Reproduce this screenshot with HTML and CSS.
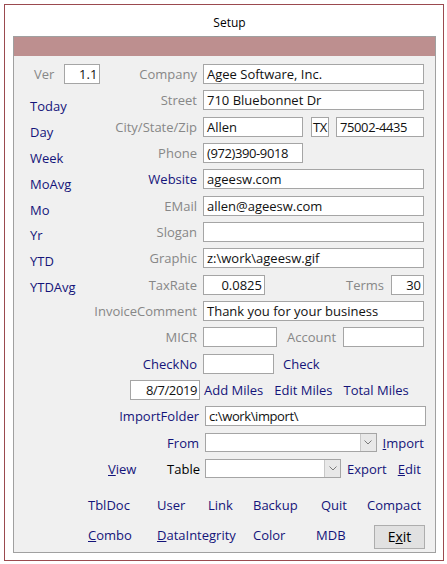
FILE: index.html
```html
<!DOCTYPE html>
<html>
<head>
<meta charset="utf-8">
<title>Setup</title>
<link rel="stylesheet" href="styles.css">
</head>
<body>
<div class="frame">
  <div class="title">Setup</div>
  <div class="panel">
    <div class="bar"></div>
    <div class="content">
      <div class="top">
        <div class="side">
          <div class="ver"><span class="lbl">Ver</span><span class="box num ver-box">1.1</span></div>
          <div class="links">
            <span class="link">Today</span>
            <span class="link">Day</span>
            <span class="link">Week</span>
            <span class="link">MoAvg</span>
            <span class="link">Mo</span>
            <span class="link">Yr</span>
            <span class="link">YTD</span>
            <span class="link">YTDAvg</span>
          </div>
        </div>
        <div class="form">
          <span class="lbl">Company</span>
          <div class="field"><span class="box grow">Agee Software, Inc.</span></div>

          <span class="lbl">Street</span>
          <div class="field"><span class="box grow">710 Bluebonnet Dr</span></div>

          <span class="lbl">City/State/Zip</span>
          <div class="field city"><span class="box w-city">Allen</span><span class="box w-st narrow">TX</span><span class="box grow narrow">75002-4435</span></div>

          <span class="lbl">Phone</span>
          <div class="field"><span class="box w-city narrow">(972)390-9018</span></div>

          <span class="lbl blue">Website</span>
          <div class="field"><span class="box grow">ageesw.com</span></div>

          <span class="lbl">EMail</span>
          <div class="field"><span class="box grow">allen@ageesw.com</span></div>

          <span class="lbl">Slogan</span>
          <div class="field"><span class="box grow"></span></div>

          <span class="lbl">Graphic</span>
          <div class="field"><span class="box grow">z:\work\ageesw.gif</span></div>

          <span class="lbl">TaxRate</span>
          <div class="field"><span class="box num w-tax">0.0825</span><span class="lbl terms">Terms</span><span class="box num w-terms">30</span></div>

          <span class="lbl">InvoiceComment</span>
          <div class="field"><span class="box grow">Thank you for your business</span></div>

          <span class="lbl">MICR</span>
          <div class="field"><span class="box w-micr"></span><span class="lbl acct">Account</span><span class="box grow"></span></div>

          <span class="lbl blue">CheckNo</span>
          <div class="field"><span class="box w-check"></span><span class="link check">Check</span></div>

          <div class="lcell"><span class="box num narrow w-date">8/7/2019</span></div>
          <div class="field miles"><span class="link">Add Miles</span><span class="link">Edit Miles</span><span class="link">Total Miles</span></div>

          <span class="lbl blue shift">ImportFolder</span>
          <div class="field"><span class="box w-import narrow">c:\work\import\</span></div>

          <span class="lbl blue shift">From</span>
          <div class="field"><span class="combo w-from"><span class="drop"><svg width="8" height="5" viewBox="0 0 8 5"><polyline points="0.5,0.5 4,4 7.5,0.5" fill="none" stroke="#7a7a7a" stroke-width="1"/></svg></span></span><span class="link"><u>I</u>mport</span></div>

          <div class="lcell view"><span class="link"><u>V</u>iew</span><span class="tbl">Table</span></div>
          <div class="field"><span class="combo w-table"><span class="drop"><svg width="8" height="5" viewBox="0 0 8 5"><polyline points="0.5,0.5 4,4 7.5,0.5" fill="none" stroke="#7a7a7a" stroke-width="1"/></svg></span></span><span class="link">Export</span><span class="link edit"><u>E</u>dit</span></div>
        </div>
      </div>
      <div class="actions row1">
        <span class="link">TblDoc</span>
        <span class="link">User</span>
        <span class="link">Link</span>
        <span class="link">Backup</span>
        <span class="link">Quit</span>
        <span class="link">Compact</span>
      </div>
      <div class="actions row2">
        <span class="link"><u>C</u>ombo</span>
        <span class="link"><u>D</u>ataIntegrity</span>
        <span class="link">Color</span>
        <span class="link">MDB</span>
        <span class="btn">E<u>x</u>it</span>
      </div>
    </div>
  </div>
</div>
</body>
</html>
```

FILE: styles.css
```css
html, body {
  margin: 0;
  padding: 0;
  background: #ffffff;
}

body {
  font-family: "Open Sans", "Noto Sans", sans-serif;
  font-size: 13px;
  color: #000000;
}

.frame {
  margin: 4px 0 0 4px;
  width: 438px;
  height: 555px;
  border: 1px solid #9b4a4f;
  display: flex;
  flex-direction: column;
}

.title {
  height: 31px;
  display: flex;
  align-items: center;
  justify-content: center;
  padding: 3px 0 0 11px;
  box-sizing: border-box;
  font-size: 12px;
  color: #000;
}

.panel {
  margin-left: 8px;
  width: 421px;
  height: 515px;
  border: 1px solid #a0a0a0;
  background: #f0f0f0;
  display: flex;
  flex-direction: column;
}

.bar {
  height: 19px;
  background: #bd8f8f;
}

.content {
  padding: 8px 10px 0 0;
}

.top {
  display: flex;
  align-items: flex-start;
}

.side {
  width: 78px;
  padding-left: 16px;
}

.ver {
  display: flex;
  align-items: center;
  height: 20px;
  padding-left: 4px;
  gap: 10px;
}

.ver-box {
  width: 36px;
}

.links {
  display: flex;
  flex-direction: column;
  margin-top: 10px;
}

.links .link {
  height: 25.9px;
  line-height: 25.9px;
}

.lbl {
  color: #878787;
  white-space: nowrap;
}

.blue,
.link {
  color: #14147a;
  white-space: nowrap;
}

.form {
  display: grid;
  grid-template-columns: 89px 221px;
  grid-auto-rows: 20px;
  column-gap: 6px;
  row-gap: 6.33px;
}

.form > .lbl {
  display: flex;
  align-items: center;
  justify-content: flex-end;
}

.form > .shift {
  margin-right: -2px;
}

.lcell {
  display: flex;
  align-items: center;
  justify-content: flex-end;
  margin-right: -3px;
}

.lcell.view {
  justify-content: space-between;
}

.field {
  display: flex;
  align-items: center;
  min-width: 0;
}

.box {
  box-sizing: border-box;
  height: 20px;
  border: 1px solid #a5a5a5;
  background: #ffffff;
  padding: 0 3px;
  line-height: 18px;
  white-space: nowrap;
  overflow: hidden;
  color: #111;
}

.num {
  text-align: right;
  padding-right: 2px;
}

.narrow {
  letter-spacing: -0.4px;
}

.grow {
  flex: 1;
}

.city {
  gap: 8px;
}

.city .w-st {
  width: 18px;
  flex: none;
  padding: 0 1px;
  margin-right: -1px;
}

.w-city { width: 100px; }
.w-tax { width: 62px; }
.w-terms { width: 33px; }
.terms { margin-left: auto; margin-right: 7px; }
.w-micr { width: 74px; }
.acct { margin-left: 10px; margin-right: 7px; }
.w-check { width: 71px; }
.check { margin-left: 9px; }
.w-date { width: 70px; }
.w-import { width: 221px; margin-left: 2px; flex: none; }

.miles {
  gap: 11px;
  margin-left: 1px;
}

.combo {
  box-sizing: border-box;
  height: 19px;
  border: 1px solid #a5a5a5;
  background: #ffffff;
  display: flex;
  justify-content: flex-end;
  padding: 0;
  margin-left: 2px;
  margin-right: 6px;
}

.w-from { width: 173px; }
.w-table { width: 136px; }

.drop {
  box-sizing: border-box;
  width: 16px;
  height: 17px;
  border-left: 1px solid #c8c8c8;
  background: #e8e8e8;
  display: flex;
  align-items: center;
  justify-content: center;
}

.edit { margin-left: 11px; }

.tbl {
  color: #000;
}

.actions {
  display: grid;
  padding-left: 74px;
  align-items: center;
}

.row1 {
  margin-top: 16px;
  height: 20px;
  grid-template-columns: 69px 51px 45px 68px 46px auto;
}

.row2 {
  margin-top: 10px;
  grid-template-columns: 69px 96px 63px 58px auto;
  align-items: start;
}

.row2 .link {
  line-height: 20px;
}

.btn {
  box-sizing: border-box;
  width: 51px;
  height: 24px;
  border: 1px solid #adadad;
  background: #e1e1e1;
  color: #000;
  display: flex;
  align-items: center;
  justify-content: center;
  font-size: 14px;
}
```
